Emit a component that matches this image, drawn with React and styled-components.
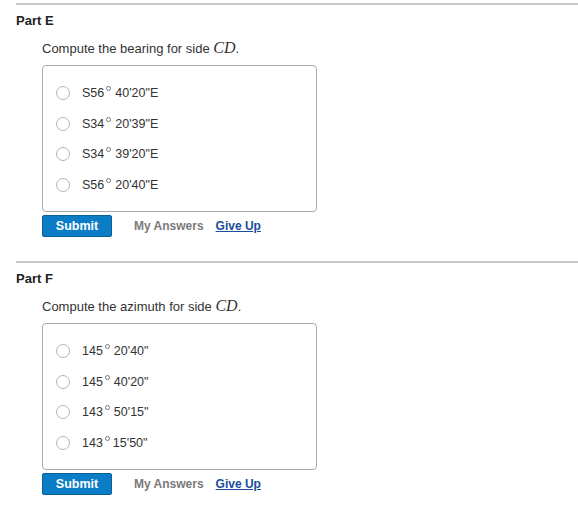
import React from 'react';
import styled, { createGlobalStyle } from 'styled-components';

const GlobalStyle = createGlobalStyle`
  body {
    margin: 0;
    background: #fff;
    font-family: "Liberation Sans", Arial, sans-serif;
    color: #333;
  }
`;

const Page = styled.div`
  padding: 3px 0 0 16px;
`;

const Part = styled.section`
  border-top: 2px solid #c8c8c8;
  padding-top: 8px;
  margin-bottom: 24px;
`;

const PartTitle = styled.h2`
  margin: 0;
  font-size: 13px;
  line-height: 16px;
  font-weight: bold;
  color: #222;
`;

const Body = styled.div`
  padding-left: 26px;
`;

const Prompt = styled.p`
  margin: 10px 0 0;
  font-size: 13px;
  line-height: 18px;
  color: #333;
`;

const MathVar = styled.span`
  font-family: "Liberation Serif", "Times New Roman", serif;
  font-style: italic;
  font-size: 16px;
`;

const Choices = styled.div`
  margin-top: 7px;
  width: 275px;
  height: 147px;
  box-sizing: border-box;
  border: 1px solid #aaa;
  border-radius: 4px;
  padding: 18px 0 0 13px;
  display: flex;
  flex-direction: column;
  gap: 12.5px;
`;

const Choice = styled.label`
  display: flex;
  align-items: center;
  height: 18px;
  font-size: 12.5px;
  color: #333;
`;

const Radio = styled.span`
  width: 14px;
  height: 14px;
  box-sizing: border-box;
  border: 1px solid #b5b5b5;
  border-radius: 50%;
  background: #fff;
  margin-right: 12px;
`;

const Deg = styled.span`
  display: inline-block;
  width: 5px;
  height: 5px;
  box-sizing: border-box;
  border: 1px solid #777;
  border-radius: 50%;
  align-self: flex-start;
  margin: 2px ${(p) => (p.$tight ? '3px' : '4px')} 0 2px;
`;

const Actions = styled.div`
  display: flex;
  align-items: center;
  margin-top: 3px;
  font-size: 12px;
  font-weight: bold;
`;

const SubmitButton = styled.button`
  width: 70px;
  height: 22px;
  background: #0b7dc6;
  border: 1px solid #0a5f98;
  border-radius: 2px;
  color: #fff;
  font-family: inherit;
  font-size: 12.5px;
  font-weight: bold;
  padding: 0;
`;

const MyAnswers = styled.span`
  margin-left: 22px;
  color: #7a7a7a;
`;

const GiveUp = styled.a`
  margin-left: 12px;
  color: #1a4d9b;
  text-decoration: underline;
`;

function Option({ deg, rest, tight }) {
  return (
    <Choice>
      <Radio />
      {deg}
      <Deg $tight={tight} />
      {rest}
    </Choice>
  );
}

const parts = [
  {
    title: 'Part E',
    prompt: 'Compute the bearing for side ',
    options: [
      ['S56', '40\'20"E'],
      ['S34', '20\'39"E'],
      ['S34', '39\'20"E'],
      ['S56', '20\'40"E'],
    ],
  },
  {
    title: 'Part F',
    prompt: 'Compute the azimuth for side ',
    options: [
      ['145', '20\'40"'],
      ['145', '40\'20"'],
      ['143', '50\'15"'],
      ['143', '15\'50"', true],
    ],
  },
];

export default function App() {
  return (
    <Page>
      <GlobalStyle />
      {parts.map((p) => (
        <Part key={p.title}>
          <PartTitle>{p.title}</PartTitle>
          <Body>
            <Prompt>
              {p.prompt}
              <MathVar>CD</MathVar>.
            </Prompt>
            <Choices>
              {p.options.map(([d, r, t]) => (
                <Option key={d + r} deg={d} rest={r} tight={t} />
              ))}
            </Choices>
            <Actions>
              <SubmitButton>Submit</SubmitButton>
              <MyAnswers>My Answers</MyAnswers>
              <GiveUp href="#">Give Up</GiveUp>
            </Actions>
          </Body>
        </Part>
      ))}
    </Page>
  );
}
